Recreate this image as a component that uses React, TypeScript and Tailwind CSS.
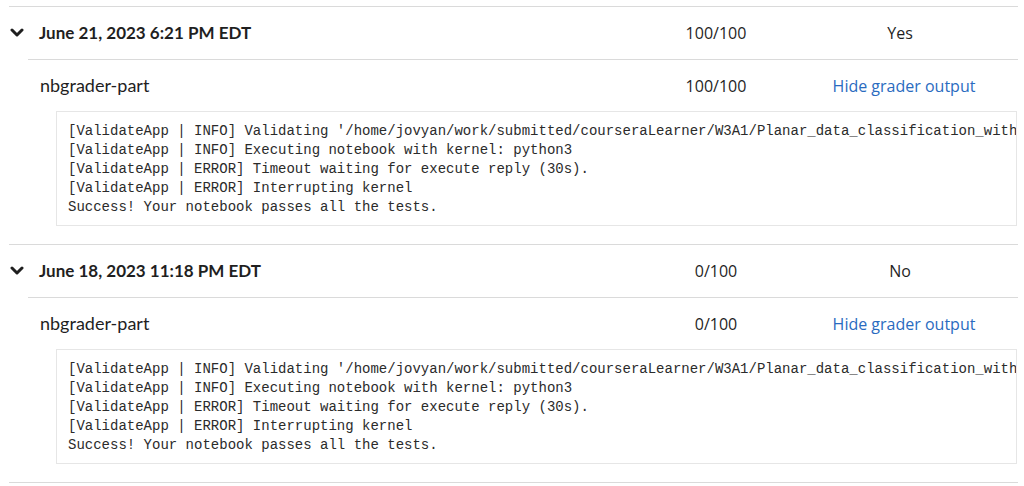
import React from "react";

const lines = [
  "[ValidateApp | INFO] Validating '/home/jovyan/work/submitted/courseraLearner/W3A1/Planar_data_classification_with",
  "[ValidateApp | INFO] Executing notebook with kernel: python3",
  "[ValidateApp | ERROR] Timeout waiting for execute reply (30s).",
  "[ValidateApp | ERROR] Interrupting kernel",
  "Success! Your notebook passes all the tests.",
];

function Chevron() {
  return (
    <svg width="14" height="10" viewBox="0 0 14 10" className="block">
      <polyline points="2,2 7,7 12,2" fill="none" stroke="#1f1f1f" strokeWidth="3" strokeLinecap="round" strokeLinejoin="round" />
    </svg>
  );
}

function Section({ date, score, passed }: { date: string; score: string; passed: string }) {
  return (
    <div className="border-t border-[#dadada] pb-[18px]">
      <div className="flex h-[52px] items-center">
        <div className="w-[30px] pl-[1px]">
          <Chevron />
        </div>
        <div className="flex-1 text-[17px] font-bold text-[#1f1f1f] [font-family:Lato,sans-serif]">{date}</div>
        <div className="w-[120px] text-center text-[16px] text-[#1f1f1f] [font-family:'Open_Sans',sans-serif]">{score}</div>
        <div className="w-[30px]" />
        <div className="w-[188px] text-center text-[16px] text-[#1f1f1f] [font-family:'Open_Sans',sans-serif]">{passed}</div>
        <div className="w-[24px]" />
      </div>
      <div className="ml-[19px] border-t border-[#dadada]">
        <div className="flex h-[51px] items-center">
          <div className="flex-1 pl-[12px] text-[18px] text-[#1f1f1f] [font-family:Lato,sans-serif]">nbgrader-part</div>
          <div className="w-[120px] text-center text-[16px] text-[#1f1f1f] [font-family:'Open_Sans',sans-serif]">{score}</div>
          <div className="w-[34px]" />
          <div className="w-[188px] text-center text-[16px] text-[#2a6bbf] [font-family:'Open_Sans',sans-serif]">Hide grader output</div>
          <div className="w-[20px]" />
        </div>
        <div className="ml-[28px] mr-[1px] overflow-hidden border border-[#e6e6e6] bg-white pb-[8px] pl-[11px] pt-[10px]">
          {lines.map((l, i) => (
            <div key={i} className="whitespace-pre text-[14px] leading-[19px] text-[#2b2b2b] [font-family:'Liberation_Mono',monospace]">
              {l}
            </div>
          ))}
        </div>
      </div>
    </div>
  );
}

export default function App() {
  return (
    <div className="h-[486px] w-[1024px] overflow-hidden bg-white pl-[9px] pr-[6px] pt-[6px]">
      <Section date="June 21, 2023 6:21 PM EDT" score="100/100" passed="Yes" />
      <Section date="June 18, 2023 11:18 PM EDT" score="0/100" passed="No" />
      <div className="border-t border-[#dadada]" />
    </div>
  );
}
